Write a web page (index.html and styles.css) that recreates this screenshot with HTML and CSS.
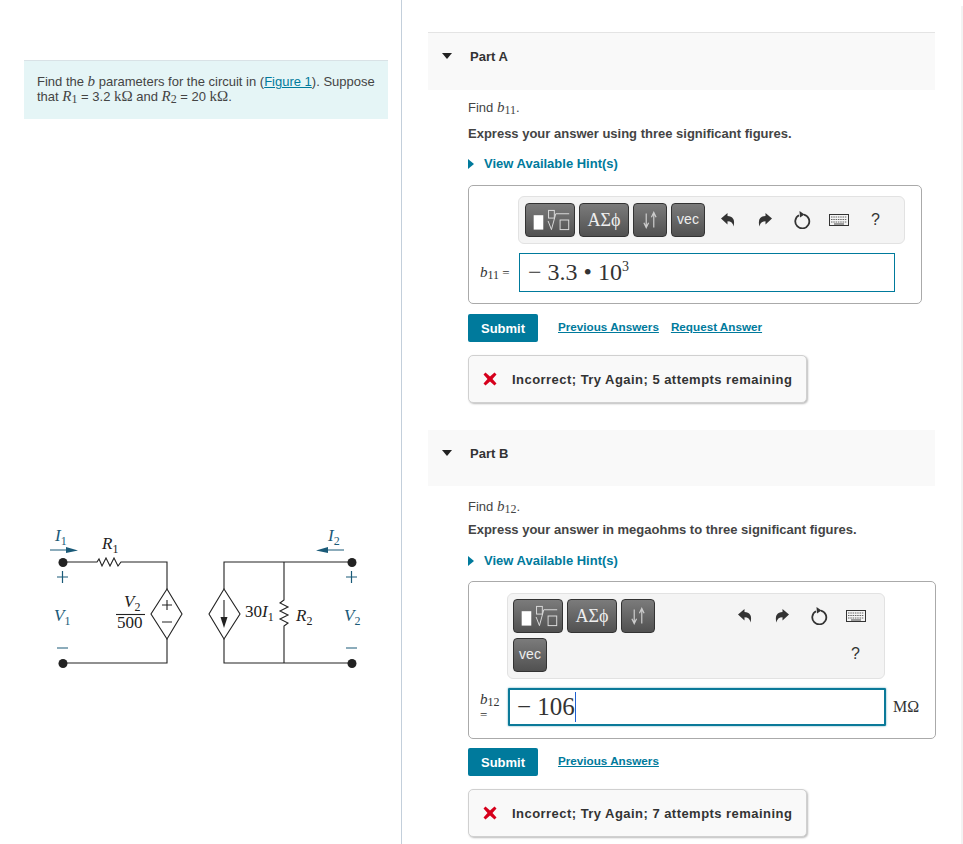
FILE: index.html
```html
<!DOCTYPE html>
<html lang="en">
<head>
    <meta charset="UTF-8">
    <meta name="viewport" content="width=device-width, initial-scale=1.0">
    <title>Part A and Part B</title>
    <link rel="stylesheet" href="styles.css">
</head>
<body>
    <!-- Shared toolbar icons -->
    <svg class="icon-defs" width="0" height="0">
        <symbol id="icon-undo" viewBox="0 0 16 16">
            <path d="M1 6.5 L7.5 1 V4 C12.5 4 15.5 7.5 13.5 14.5 C13 11 11 9.3 7.5 9.3 V12.5 Z" fill="#333"/>
        </symbol>
        <symbol id="icon-reset" viewBox="0 0 18 18">
            <path d="M6 4.2 A7 7 0 1 0 11 3.6" fill="none" stroke="#333" stroke-width="1.8"/>
            <path d="M6.5 0 L11.5 3.6 L7 6.5 Z" fill="#333"/>
        </symbol>
        <symbol id="icon-keyboard" viewBox="0 0 20 12">
            <rect x="0.5" y="0.5" width="19" height="11" fill="#f4f4f4" stroke="#333"/>
            <path d="M2 3 H18 M2 5.5 H18 M2 8 H18" stroke="#666" stroke-width="1.2" stroke-dasharray="1.5 0.8"/>
            <path d="M5 10 H15" stroke="#444"/>
        </symbol>
        <symbol id="icon-template" viewBox="0 0 50 34">
            <rect x="8" y="12" width="10" height="15" fill="#fff"/>
            <rect x="23.5" y="7" width="6" height="8" fill="none" stroke="#ddd"/>
            <path d="M23 18 L26.5 27 L31 10.5 H45" fill="none" stroke="#ddd"/>
            <rect x="35.5" y="17" width="9" height="10" fill="none" stroke="#ddd"/>
        </symbol>
        <symbol id="icon-arrows" viewBox="0 0 34 34">
            <path d="M13 10 V24 M10.500 20 L13 25 L15.500 20 M21 25 V10 M18.500 14 L21 9 L23.500 14" fill="none" stroke="#ccc" stroke-width="1.3"/>
        </symbol>
        <symbol id="icon-wrong" viewBox="0 0 14 14">
            <path d="M2.5 0.5 L7 4.5 L11.5 0.5 L13.5 2.5 L9.5 7 L13.5 11.5 L11.5 13.5 L7 9.5 L2.5 13.5 L0.5 11.5 L4.5 7 L0.5 2.5 Z" fill="#d6001c"/>
        </symbol>
    </svg>

    <div class="container">
        <div class="left-pane">
            <div class="problem-text">
                Find the <i class="math">b</i> parameters for the circuit in (<a href="#">Figure 1</a>). Suppose<br>
                that <i class="math">R</i><sub class="math">1</sub> = 3.2 <span class="math unit-text">kΩ</span> and <i class="math">R</i><sub class="math">2</sub> = 20 <span class="math unit-text">kΩ</span>.
            </div>

            <!-- Circuit figure, coordinates are page x and y minus the viewBox offset -->
            <svg class="circuit" width="377" height="170" viewBox="0 515 377 170">
                <g fill="none" stroke="#222" stroke-width="1.1">
                    <path d="M63 562 H97 L99 559 L102 566 L106 558 L110 566 L114 558 L118 566 L121 562 H167 V589"/>
                    <path d="M167 589 L182 614 L167 639 L151 614 Z"/>
                    <path d="M167 639 V663 H63"/>
                    <path d="M162 605 H172 M167 600 V610 M162 622 H172"/>
                    <path d="M224 589 V562 H352 M224 639 V663 H352"/>
                    <path d="M224 589 L240 614 L224 639 L209 614 Z"/>
                    <path d="M224 600 V620"/>
                    <path d="M284 562 V600 L280 603 L288 607 L280 611 L288 615 L280 619 L288 623 L284 626 V663"/>
                    <path d="M116 614.500 H145"/>
                </g>
                <path d="M220.500 617 L224 628 L227.500 617 Z" fill="#222"/>
                <circle cx="63" cy="562.500" r="4.500" fill="#222"/>
                <circle cx="63" cy="663.500" r="4.500" fill="#222"/>
                <circle cx="352" cy="562.500" r="4.500" fill="#222"/>
                <circle cx="352" cy="663.500" r="4.500" fill="#222"/>
                <g stroke="#1a5a78" stroke-width="1.2">
                    <path d="M50 550 H70 M57 577 H68 M62.500 571 V583 M57 648 H68"/>
                    <path d="M326 550 H344 M346 577 H357 M351.500 571 V583 M346 648 H357"/>
                </g>
                <path d="M66 547 L78 550.500 L66 553 Z" fill="#1a5a78"/>
                <path d="M316 550.500 L328 547 L328 553 Z" fill="#1a5a78"/>
                <text class="fig-var fig-blue" x="55" y="541">I<tspan class="fig-sub" dy="4">1</tspan></text>
                <text class="fig-var" x="102" y="549">R<tspan class="fig-sub" dy="4">1</tspan></text>
                <text class="fig-var fig-blue" x="54" y="621">V<tspan class="fig-sub" dy="4">1</tspan></text>
                <text class="fig-var" x="124" y="607">V<tspan class="fig-sub" dy="4">2</tspan></text>
                <text class="fig-num" x="117" y="628">500</text>
                <text class="fig-num" x="245" y="617">30<tspan class="fig-var">I</tspan><tspan class="fig-sub" dy="4">1</tspan></text>
                <text class="fig-var" x="296" y="621">R<tspan class="fig-sub" dy="4">2</tspan></text>
                <text class="fig-var fig-blue" x="328" y="541">I<tspan class="fig-sub" dy="4">2</tspan></text>
                <text class="fig-var fig-blue" x="344" y="621">V<tspan class="fig-sub" dy="4">2</tspan></text>
            </svg>
        </div>

        <div class="right-pane">
            <!-- Part A -->
            <div class="part-header part-header-first">
                <span class="caret-down"></span>
                <span class="part-title">Part A</span>
            </div>
            <div class="part-body part-body-a">
                <p class="find-line">Find <i class="math">b</i><sub class="math">11</sub>.</p>
                <p class="express-line">Express your answer using three significant figures.</p>
                <p class="hint-line"><span class="caret-right"></span><a href="#">View Available Hint(s)</a></p>

                <div class="answer-box answer-box-a">
                    <div class="toolbar toolbar-a">
                        <div class="tool-buttons">
                            <button class="tool-btn tool-wide"><svg width="50" height="34"><use href="#icon-template"/></svg></button>
                            <button class="tool-btn tool-wide tool-greek">ΑΣϕ</button>
                            <button class="tool-btn"><svg width="34" height="34"><use href="#icon-arrows"/></svg></button>
                            <button class="tool-btn tool-vec">vec</button>
                        </div>
                        <div class="tool-icons">
                            <span class="tool-icon"><svg width="16" height="16"><use href="#icon-undo"/></svg></span>
                            <span class="tool-icon"><svg class="flip" width="16" height="16"><use href="#icon-undo"/></svg></span>
                            <span class="tool-icon"><svg width="18" height="18"><use href="#icon-reset"/></svg></span>
                            <span class="tool-icon"><svg width="20" height="12"><use href="#icon-keyboard"/></svg></span>
                            <span class="tool-icon tool-help">?</span>
                        </div>
                    </div>
                    <div class="answer-row">
                        <div class="answer-label"><i class="math">b</i><sub class="math">11</sub> =</div>
                        <div class="answer-input">− 3.3 • 10<sup>3</sup></div>
                    </div>
                </div>

                <div class="submit-row">
                    <button class="submit-btn">Submit</button>
                    <a href="#">Previous Answers</a>
                    <a href="#">Request Answer</a>
                </div>
                <div class="feedback">
                    <svg width="14" height="14"><use href="#icon-wrong"/></svg>
                    <span>Incorrect; Try Again; 5 attempts remaining</span>
                </div>
            </div>

            <!-- Part B -->
            <div class="part-header">
                <span class="caret-down"></span>
                <span class="part-title">Part B</span>
            </div>
            <div class="part-body part-body-b">
                <p class="find-line">Find <i class="math">b</i><sub class="math">12</sub>.</p>
                <p class="express-line">Express your answer in megaohms to three significant figures.</p>
                <p class="hint-line"><span class="caret-right"></span><a href="#">View Available Hint(s)</a></p>

                <div class="answer-box answer-box-b">
                    <div class="toolbar toolbar-b">
                        <div class="tool-buttons">
                            <button class="tool-btn tool-wide"><svg width="50" height="34"><use href="#icon-template"/></svg></button>
                            <button class="tool-btn tool-wide tool-greek">ΑΣϕ</button>
                            <button class="tool-btn"><svg width="34" height="34"><use href="#icon-arrows"/></svg></button>
                            <button class="tool-btn tool-vec">vec</button>
                        </div>
                        <div class="tool-icons">
                            <span class="tool-icon"><svg width="16" height="16"><use href="#icon-undo"/></svg></span>
                            <span class="tool-icon"><svg class="flip" width="16" height="16"><use href="#icon-undo"/></svg></span>
                            <span class="tool-icon"><svg width="18" height="18"><use href="#icon-reset"/></svg></span>
                            <span class="tool-icon"><svg width="20" height="12"><use href="#icon-keyboard"/></svg></span>
                            <span class="tool-icon tool-help">?</span>
                        </div>
                    </div>
                    <div class="answer-row">
                        <div class="answer-label answer-label-b"><i class="math">b</i><sub class="math">12</sub><br>=</div>
                        <div class="answer-input answer-input-focus"><span class="typed">− 106</span></div>
                        <div class="answer-unit">MΩ</div>
                    </div>
                </div>

                <div class="submit-row">
                    <button class="submit-btn">Submit</button>
                    <a href="#">Previous Answers</a>
                </div>
                <div class="feedback">
                    <svg width="14" height="14"><use href="#icon-wrong"/></svg>
                    <span>Incorrect; Try Again; 7 attempts remaining</span>
                </div>
            </div>
        </div>

        <div class="scroll-strip"></div>
    </div>
</body>
</html>
```

FILE: styles.css
```css
body, html {
    margin: 0;
    padding: 0;
    height: 100%;
    overflow: hidden;
    background-color: white;
}
body {
    font-family: "Liberation Sans", Arial, sans-serif;
    font-size: 13px;
    color: #333;
}
a {
    color: #007a9c;
}
p {
    margin: 0;
}
.icon-defs {
    position: absolute;
}
.math {
    font-family: "Liberation Serif", serif;
}
i.math {
    font-size: 15px;
    line-height: 0;
}
sub.math {
    font-size: 12px;
    line-height: 0;
    vertical-align: -2px;
}
.unit-text {
    font-size: 15px;
}
.container {
    display: flex;
    height: 844px;
}

/* Left pane with the problem and the figure */
.left-pane {
    width: 402px;
    height: 844px;
    flex-shrink: 0;
    box-sizing: border-box;
    border-right: 1px solid #c3cfdb;
    padding: 60px 13px 0 24px;
}
.problem-text {
    background-color: #e5f5f6;
    border-top: 1px solid #d9e2e6;
    height: 59px;
    padding: 13px 13px 0;
    box-sizing: border-box;
    font-size: 13px;
    line-height: 15px;
    color: #444;
    white-space: nowrap;
}
.circuit {
    display: block;
    margin: 396px 0 0 -24px;
}
.fig-var {
    font-family: "Liberation Serif", serif;
    font-style: italic;
    font-size: 17px;
    fill: #222;
}
.fig-blue {
    fill: #1a5a78;
}
.fig-sub {
    font-family: "Liberation Serif", serif;
    font-style: normal;
    font-size: 12px;
}
.fig-num {
    font-family: "Liberation Serif", serif;
    font-size: 17px;
    fill: #222;
}

/* Right pane with the parts */
.right-pane {
    width: 507px;
    margin-left: 26px;
    padding-top: 32px;
}
.scroll-strip {
    width: 2px;
    margin: 6px 0 0 auto;
    background-color: #f3f3f3;
}
.part-header {
    display: flex;
    align-items: flex-start;
    height: 56px;
    padding: 16px 0 0 14px;
    box-sizing: border-box;
    background-color: #f9f9f9;
}
.part-header-first {
    height: 58px;
    border-top: 1px solid #e4e4e4;
}
.caret-down {
    width: 0;
    height: 0;
    margin: 4px 18px 0 0;
    border-left: 5.5px solid transparent;
    border-right: 5.5px solid transparent;
    border-top: 6px solid #222;
}
.part-title {
    font-size: 13px;
    font-weight: bold;
    line-height: 16px;
    color: #333;
}
.part-body {
    padding-left: 40px;
    box-sizing: border-box;
    width: 509px;
}
.part-body-a {
    height: 340px;
    padding-top: 9px;
}
.part-body-b {
    padding-top: 12px;
}
.find-line {
    line-height: 18px;
    color: #444;
}
.express-line {
    margin-top: 8px;
    font-weight: bold;
    line-height: 18px;
    color: #444;
}
.part-body-b .express-line {
    margin-top: 5px;
}
.hint-line {
    margin-top: 12px;
    line-height: 18px;
    font-weight: bold;
    display: flex;
    align-items: center;
}
.part-body-b .hint-line {
    margin-top: 13px;
}
.hint-line a {
    text-decoration: none;
}
.caret-right {
    width: 0;
    height: 0;
    margin-right: 10px;
    border-top: 5px solid transparent;
    border-bottom: 5px solid transparent;
    border-left: 6px solid #007a9c;
}

/* Answer box */
.answer-box {
    border: 1px solid #aaa;
    border-radius: 5px;
    box-sizing: border-box;
    background-color: white;
}
.answer-box-a {
    width: 454px;
    height: 119px;
    margin-top: 12px;
    padding: 10px 17px 0 11px;
}
.answer-box-b {
    width: 468px;
    height: 158px;
    margin-top: 11px;
    padding: 11px 10px 0 11px;
}
.toolbar {
    display: flex;
    background-color: #f4f4f4;
    border: 1px solid #e2e2e2;
    border-radius: 6px;
    box-sizing: border-box;
}
.toolbar-a {
    width: 387px;
    height: 48px;
    margin-left: 38px;
    padding: 6px 6px 0;
}
.toolbar-b {
    width: 378px;
    height: 86px;
    margin-left: 27px;
    padding: 5px 6px 0 5px;
}
.tool-buttons {
    display: flex;
    flex-wrap: wrap;
    align-content: flex-start;
    gap: 5px 4px;
}
.toolbar-a .tool-buttons {
    width: 180px;
}
.toolbar-b .tool-buttons {
    width: 160px;
}
.tool-btn {
    width: 34px;
    height: 34px;
    padding: 0;
    box-sizing: border-box;
    border: 1px solid #333;
    border-radius: 4px;
    background: linear-gradient(#7b7b7b, #515151);
    color: #eee;
    display: flex;
    align-items: center;
    justify-content: center;
    overflow: hidden;
}
.tool-wide {
    width: 50px;
}
.tool-greek {
    font-family: "Liberation Serif", serif;
    font-size: 18px;
}
.tool-vec {
    font-family: "Liberation Sans", Arial, sans-serif;
    font-size: 14px;
    padding-bottom: 2px;
}
.tool-icons {
    display: flex;
    flex-wrap: wrap;
    justify-content: flex-end;
    align-content: flex-start;
    gap: 4px 0;
    flex: 1;
    padding-right: 4px;
}
.toolbar-b .tool-icons {
    padding-left: 30px;
}
.tool-icon {
    width: 37px;
    height: 34px;
    display: flex;
    align-items: center;
    justify-content: center;
}
.tool-help {
    font-size: 16px;
    color: #333;
}
.flip {
    transform: scaleX(-1);
}
.answer-row {
    display: flex;
    align-items: center;
    margin-top: 9px;
}
.answer-label {
    width: 39px;
    flex-shrink: 0;
    font-family: "Liberation Serif", serif;
    font-size: 13px;
    color: #333;
    white-space: nowrap;
}
.answer-label-b {
    width: 28px;
    line-height: 15px;
}
.answer-input {
    width: 376px;
    flex-shrink: 0;
    height: 39px;
    box-sizing: border-box;
    border: 1px solid #007a9c;
    padding-left: 8px;
    font-family: "Liberation Serif", serif;
    font-size: 24px;
    line-height: 37px;
    color: #333;
}
.answer-input sup {
    font-size: 14px;
    line-height: 0;
    vertical-align: 9px;
}
.answer-input-focus {
    width: 378px;
    height: 38px;
    border: 2px solid #0b7a99;
    border-radius: 1px;
    font-size: 25px;
    line-height: 34px;
    padding-left: 7px;
    box-shadow: 0 0 2px #4d9fb5;
}
.typed {
    border-right: 1px solid #2060d0;
    display: inline-block;
    height: 30px;
    line-height: 30px;
}
.answer-unit {
    margin-left: 7px;
    font-family: "Liberation Serif", serif;
    font-size: 16px;
    color: #333;
}

/* Submit and feedback */
.submit-row {
    display: flex;
    align-items: flex-start;
    gap: 12px;
    margin-top: 9px;
    font-size: 11.7px;
    font-weight: bold;
    line-height: 26px;
}
.part-body-a .submit-row {
    margin-top: 10px;
}
.submit-row a:first-of-type {
    margin-left: 8px;
}
.submit-btn {
    width: 70px;
    height: 28px;
    padding: 0;
    border: none;
    border-radius: 2px;
    background-color: #007a9c;
    color: white;
    font-family: "Liberation Sans", Arial, sans-serif;
    font-size: 13px;
    font-weight: bold;
}
.feedback {
    display: flex;
    align-items: center;
    gap: 15px;
    width: 339px;
    height: 48px;
    margin-top: 13px;
    padding-left: 14px;
    box-sizing: border-box;
    border: 1px solid #d0d0d0;
    border-radius: 5px;
    background-color: #f9f9f9;
    box-shadow: 1px 1px 2px #bbb;
    font-size: 13px;
    font-weight: bold;
    letter-spacing: 0.46px;
    color: #333;
    white-space: nowrap;
}
```
